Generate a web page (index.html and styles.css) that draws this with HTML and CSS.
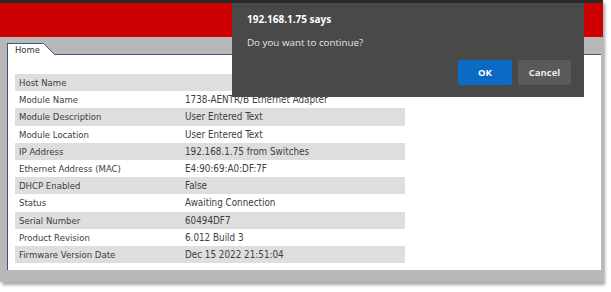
FILE: index.html
```html
<!DOCTYPE html>
<html>
<head>
<meta charset="utf-8">
<link rel="stylesheet" href="styles.css">
</head>
<body>
<div class="frame">
  <div class="topline"></div>
  <div class="banner"></div>
  <div class="body">
    <div class="tabs">
      <div class="tab">Home</div>
      <svg class="tab-slant" width="12" height="12" viewBox="0 0 12 12"><polygon points="0,0 0,12 12,12 0.5,0.5" fill="#fff"/><path d="M0 0.5 L0.6 0.5 L11.6 11.5 L12 11.5" fill="none" stroke="#3f5680" stroke-width="1"/></svg>
      <div class="tab-rest"></div>
    </div>
    <div class="panel">
      <div class="info">
        <div class="row"><span class="label">Host Name</span><span class="value"></span></div>
        <div class="row"><span class="label">Module Name</span><span class="value">1738-AENTR/B Ethernet Adapter</span></div>
        <div class="row"><span class="label">Module Description</span><span class="value">User Entered Text</span></div>
        <div class="row"><span class="label">Module Location</span><span class="value">User Entered Text</span></div>
        <div class="row"><span class="label">IP Address</span><span class="value">192.168.1.75 from Switches</span></div>
        <div class="row"><span class="label">Ethernet Address (MAC)</span><span class="value">E4:90:69:A0:DF:7F</span></div>
        <div class="row"><span class="label">DHCP Enabled</span><span class="value">False</span></div>
        <div class="row"><span class="label">Status</span><span class="value">Awaiting Connection</span></div>
        <div class="row"><span class="label">Serial Number</span><span class="value">60494DF7</span></div>
        <div class="row"><span class="label">Product Revision</span><span class="value">6.012 Build 3</span></div>
        <div class="row"><span class="label">Firmware Version Date</span><span class="value">Dec 15 2022 21:51:04</span></div>
      </div>
    </div>
  </div>
</div>
<div class="dialog">
  <div class="dlg-title">192.168.1.75 says</div>
  <div class="dlg-msg">Do you want to continue?</div>
  <div class="dlg-actions">
    <button class="btn btn-ok">OK</button>
    <button class="btn btn-cancel">Cancel</button>
  </div>
</div>
</body>
</html>
```
FILE: styles.css
```css
html, body {
  margin: 0;
  padding: 0;
  background: #ffffff;
}
body {
  width: 611px;
  height: 292px;
  position: relative;
  overflow: hidden;
}
.frame {
  width: 603px;
  box-shadow: 2px 3px 3px rgba(0, 0, 0, 0.35);
}
.topline {
  height: 3px;
  background: #2a2a2a;
}
.banner {
  height: 34px;
  background: #cc0000;
}
.body {
  background: #b8b8b8;
  padding: 6px 2px 12px 7px;
}
.tabs {
  display: flex;
  height: 12px;
  align-items: stretch;
}
.tab {
  box-sizing: border-box;
  width: 36px;
  height: 12px;
  background: #ffffff;
  border-top: 1px solid #3f5680;
  border-left: 1px solid #3f5680;
  padding-left: 7px;
  font-family: "DejaVu Sans Condensed", "DejaVu Sans", sans-serif;
  font-stretch: condensed;
  font-size: 9.4px;
  line-height: 12px;
  color: #333333;
}
.tab-slant {
  display: block;
  flex: none;
}
.tab-rest {
  flex: 1;
  border-bottom: 1px solid #3f5680;
}
.panel {
  background: #ffffff;
  border-left: 1px solid #3f5680;
  height: 215px;
  box-sizing: border-box;
  padding: 19px 0 0 7px;
}
.info {
  width: 390px;
  font-family: "DejaVu Sans Condensed", "DejaVu Sans", sans-serif;
  font-stretch: condensed;
  font-size: 9.5px;
  color: #3d3d3d;
}
.row {
  display: flex;
  align-items: center;
  height: 17.2px;
}
.row:nth-child(odd) {
  background: #dedede;
}
.label {
  box-sizing: border-box;
  width: 170px;
  padding-left: 4px;
}
.value {
  font-size: 9.8px;
}
.dialog {
  position: absolute;
  left: 232px;
  top: 3px;
  width: 352px;
  height: 94px;
  box-sizing: border-box;
  background: #494949;
  padding: 9px 13px 0 15px;
  font-family: "Open Sans", "Noto Sans", sans-serif;
}
.dlg-title {
  font-size: 10px;
  font-weight: 700;
  color: #ffffff;
  line-height: 14px;
}
.dlg-msg {
  margin-top: 10px;
  font-size: 9.8px;
  color: #e6e6e6;
  line-height: 14px;
}
.dlg-actions {
  display: flex;
  justify-content: flex-end;
  gap: 6px;
  margin-top: 10px;
}
.btn {
  width: 54px;
  height: 25px;
  border: none;
  border-radius: 2px;
  font-family: "Open Sans", "Noto Sans", sans-serif;
  font-size: 9.5px;
  font-weight: 700;
  padding: 0;
}
.btn-ok {
  background: #0b6bc4;
  color: #ffffff;
}
.btn-cancel {
  width: 53px;
  background: #5a5a5a;
  color: #e8e8e8;
}
```
